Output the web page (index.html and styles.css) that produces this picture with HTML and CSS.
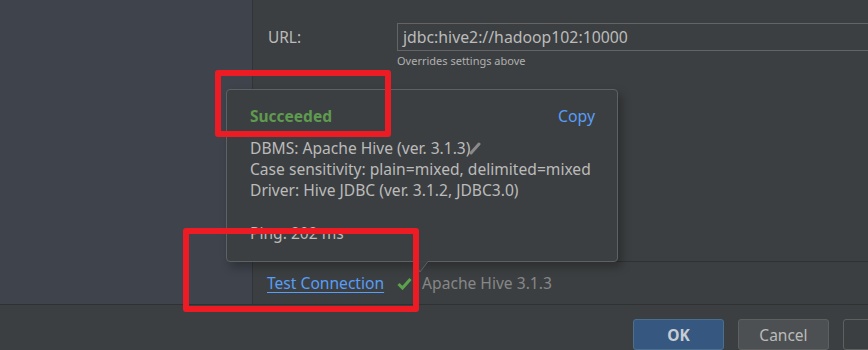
FILE: index.html
```html
<!DOCTYPE html>
<html>
<head>
<meta charset="utf-8">
<link rel="stylesheet" href="styles.css">
</head>
<body>
<div class="window">
  <div class="main">
    <div class="sidebar"></div>
    <div class="content">
      <div class="form">
        <div class="row">
          <label class="label">URL:</label>
          <div class="field">jdbc:hive2://hadoop102:10000</div>
        </div>
        <div class="hint">Overrides settings above</div>
      </div>
      <div class="status">
        <a class="link">Test Connection</a>
        <svg class="check" width="15" height="13" viewBox="0 0 15 13"><path d="M1.5 7 L5.5 11 L13.5 2" fill="none" stroke="#59a34a" stroke-width="3"/></svg>
        <span class="version">Apache Hive 3.1.3</span>
      </div>
    </div>
  </div>
  <div class="footer">
    <button class="btn primary">OK</button>
    <button class="btn">Cancel</button>
    <button class="btn ghost"></button>
  </div>
</div>

<div class="popup">
  <div class="popup-head">
    <span class="ok">Succeeded</span>
    <a class="copy">Copy</a>
  </div>
  <div class="popup-body">
    <div class="line">DBMS: Apache Hive (ver. 3.1.3)<svg class="pencil" width="13" height="14" viewBox="0 0 13 14"><path d="M2 12 L10 3" stroke="#8a8a8a" stroke-width="3" stroke-linecap="round"/><path d="M0.8 13.4 L2.2 10.6 L3.6 12" fill="#8a8a8a"/></svg></div>
    <div class="line">Case sensitivity: plain=mixed, delimited=mixed</div>
    <div class="line">Driver: Hive JDBC (ver. 3.1.2, JDBC3.0)</div>
    <div class="line blank"></div>
    <div class="line">Ping: 202 ms</div>
  </div>
</div>
<svg class="tail" width="20" height="12" viewBox="0 0 20 12"><path d="M0 0.5 L6 11 L14 0.5" fill="#3c3f41" stroke="#5e6163" stroke-width="1"/><path d="M0.5 0 L13.5 0" stroke="#3c3f41" stroke-width="1.6"/></svg>

<div class="mark mark-1"></div>
<div class="mark mark-2"></div>
</body>
</html>
```
FILE: styles.css
```css
html, body {
  margin: 0;
  padding: 0;
}
body {
  width: 868px;
  height: 350px;
  overflow: hidden;
  background: #3c3f41;
  font-family: "Noto Sans", "Open Sans", sans-serif;
  color: #bbbbbb;
  position: relative;
}
.window {
  display: flex;
  flex-direction: column;
  height: 350px;
  overflow: hidden;
}
.main {
  display: flex;
  height: 304px;
  border-bottom: 1px solid #2f3133;
}
.sidebar {
  width: 252px;
  background: #3e434c;
  border-right: 1px solid #323438;
}
.content {
  flex: 1;
  display: flex;
  flex-direction: column;
  justify-content: space-between;
  overflow: hidden;
}
.form {
  padding: 23px 0 0 15px;
}
.row {
  display: flex;
  align-items: center;
}
.label {
  width: 129px;
  font-size: 15.4px;
}
.field {
  flex: 1;
  height: 26px;
  border: 1px solid #646464;
  border-right: none;
  background: #3c3f41;
  font-size: 15.8px;
  line-height: 26px;
  padding-left: 5px;
  color: #bbbbbb;
}
.hint {
  margin: 2px 0 0 129px;
  font-size: 11px;
  color: #b0b0b0;
}
.status {
  height: 42px;
  border-top: 1px solid #2f3133;
  display: flex;
  align-items: center;
  padding-left: 14px;
  font-size: 15.6px;
}
.link {
  color: #589df6;
  text-decoration: underline;
  text-underline-offset: 3px;
}
.check {
  margin-left: 13px;
  margin-right: 10px;
}
.version {
  color: #878787;
}
.footer {
  flex: 1;
  display: flex;
  align-items: flex-start;
  padding: 14px 0 0 633px;
  gap: 14px;
  overflow: hidden;
}
.btn {
  flex-shrink: 0;
  width: 91px;
  height: 31px;
  border-radius: 3px;
  border: 1px solid #5e6060;
  background: #4c5052;
  color: #bbbbbb;
  font-family: "Noto Sans", "Open Sans", sans-serif;
  font-size: 15.5px;
  padding: 0;
}
.btn.primary {
  background: #365880;
  border-color: #4c708c;
  font-weight: bold;
  color: #c7cdd3;
}
.btn.ghost {
  background: #3c3f41;
}
.popup {
  position: absolute;
  left: 226px;
  top: 89px;
  width: 390px;
  height: 171px;
  border: 1px solid #5e6163;
  border-radius: 4px;
  background: #3c3f41;
  box-shadow: 4px 5px 10px rgba(0, 0, 0, 0.28);
  box-sizing: content-box;
  padding: 0;
}
.popup-head {
  display: flex;
  justify-content: space-between;
  align-items: center;
  padding: 15px 22px 0 23px;
  height: 22px;
}
.ok {
  color: #5f9b4f;
  font-weight: bold;
  font-size: 15.5px;
}
.copy {
  color: #589df6;
  font-size: 15.8px;
}
.popup-body {
  padding: 11px 0 0 23px;
  font-size: 15.6px;
}
.line {
  height: 21px;
  line-height: 21px;
  white-space: nowrap;
}
.line.blank {
  height: 22px;
}
.pencil {
  vertical-align: -1px;
  margin-left: -1px;
}
.tail {
  position: absolute;
  left: 414px;
  top: 261px;
}
.mark {
  position: absolute;
  border: 6px solid #ed1c24;
  border-radius: 3px;
  box-sizing: border-box;
}
.mark-1 {
  left: 215px;
  top: 70px;
  width: 176px;
  height: 67px;
}
.mark-2 {
  left: 183px;
  top: 228px;
  width: 236px;
  height: 84px;
}
```
